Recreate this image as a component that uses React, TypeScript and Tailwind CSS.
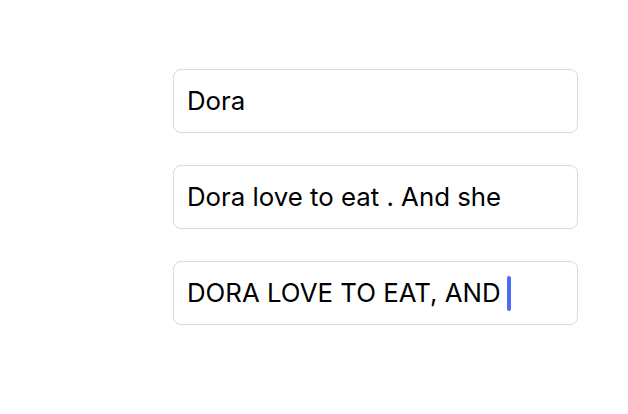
const fields = ['Dora', 'Dora love to eat . And she', 'DORA LOVE TO EAT, AND'];

export default function App() {
  return (
    <div className="w-[628px] h-[414px] bg-white pl-[173px] pt-[69px] font-['Inter',sans-serif]">
      <div className="flex flex-col gap-[32px] w-[405px]">
        {fields.map((text, i) => (
          <div
            key={i}
            className="h-[64px] border border-[#dadada] rounded-[8px] px-[13px] flex items-center text-[25.8px] text-black"
          >
            <span>{text}</span>
            {i === 2 && <span className="ml-[6px] w-[4px] h-[35px] rounded-full bg-[#4c6ef5]" />}
          </div>
        ))}
      </div>
    </div>
  );
}
